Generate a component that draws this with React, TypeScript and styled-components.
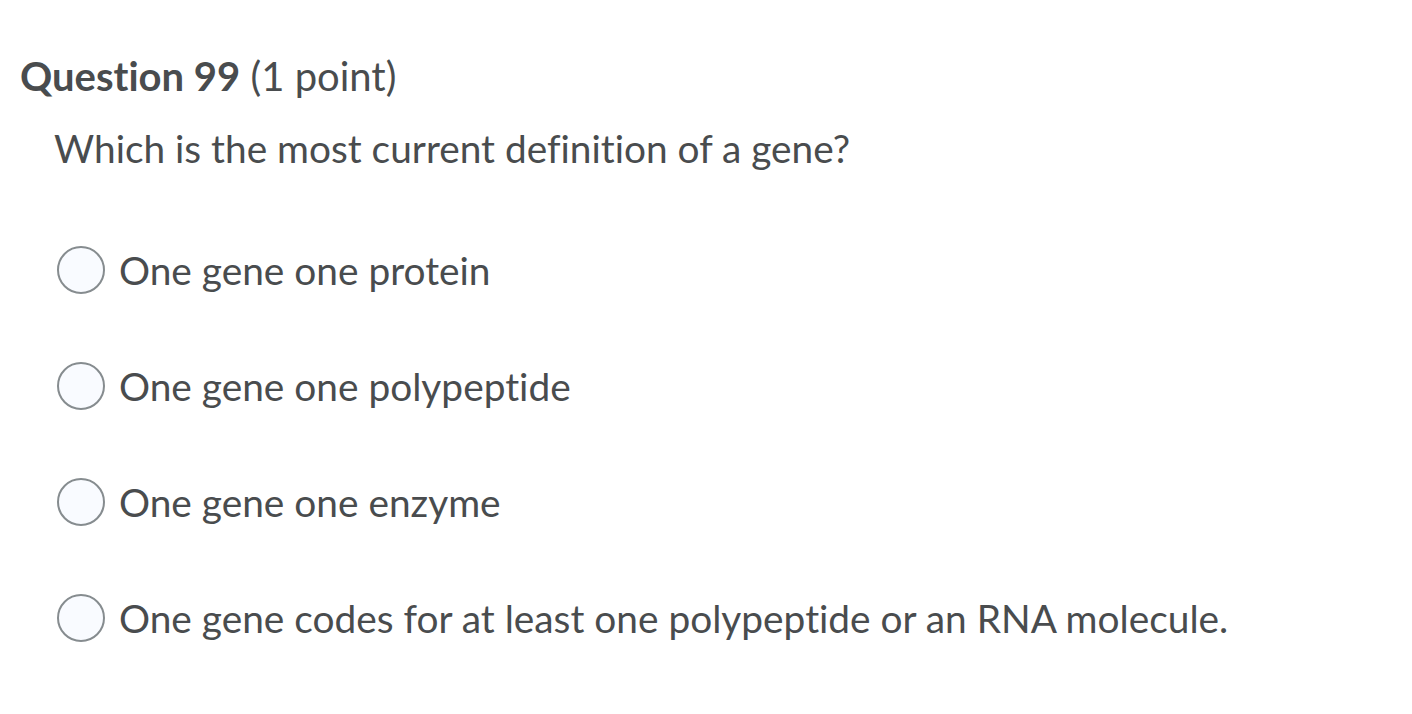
import React from "react";
import styled, { createGlobalStyle } from "styled-components";

const GlobalStyle = createGlobalStyle`
  body {
    margin: 0;
    background: #ffffff;
    font-family: Lato, "Open Sans", sans-serif;
    color: #494c4e;
    font-variant-ligatures: none;
  }
`;

const options = [
  "One gene one protein",
  "One gene one polypeptide",
  "One gene one enzyme",
  "One gene codes for at least one polypeptide or an RNA molecule.",
];

const App: React.FC = () => {
  return (
    <>
      <GlobalStyle />
      <Page>
        <Heading>
          <strong>Question 99</strong> (1 point)
        </Heading>
        <Prompt>Which is the most current definition of a gene?</Prompt>
        <OptionList>
          {options.map((text) => (
            <Option key={text}>
              <Radio type="radio" name="q99" />
              <span>{text}</span>
            </Option>
          ))}
        </OptionList>
      </Page>
    </>
  );
};

const Page = styled.div`
  padding: 52px 20px 0 20px;
  display: flex;
  flex-direction: column;
`;

const Heading = styled.h2`
  margin: 0;
  font-size: 40px;
  font-weight: 400;
  line-height: 48px;
  color: #494c4e;

  strong {
    font-weight: 700;
  }
`;

const Prompt = styled.p`
  margin: 24px 0 0 34px;
  font-size: 38.8px;
  line-height: 48px;
`;

const OptionList = styled.div`
  display: flex;
  flex-direction: column;
  gap: 68px;
  margin: 74px 0 0 37px;
`;

const Option = styled.label`
  display: flex;
  align-items: center;
  gap: 14px;
  font-size: 38.85px;
  line-height: 48px;
  cursor: pointer;
`;

const Radio = styled.input`
  appearance: none;
  margin: 0;
  width: 48px;
  height: 48px;
  border-radius: 50%;
  border: 2px solid #868c8f;
  background: #f9fbff;
  box-sizing: border-box;
  flex: none;
`;

export default App;
